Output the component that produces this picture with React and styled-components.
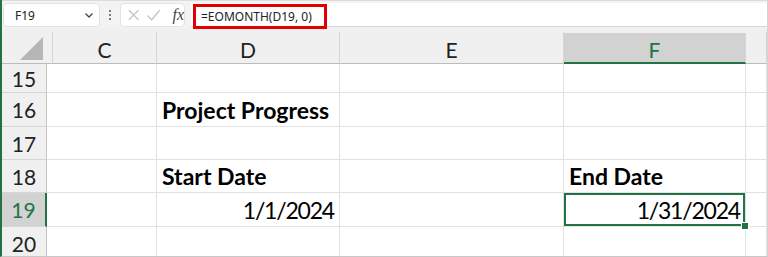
import React from 'react'
import styled, { createGlobalStyle, css } from 'styled-components'

const green = '#217346'
const COLS = [45, 6, 104, 183, 224, 182, 21]
const ROW_HEIGHTS = [29, 34, 33, 33, 34, 33]

const GlobalStyle = createGlobalStyle`
  html, body {
    margin: 0;
    padding: 0;
    background: #fff;
    overflow: hidden;
  }
  * { box-sizing: border-box; }
`

const Window = styled.div`
  width: 768px;
  height: 257px;
  overflow: hidden;
  display: flex;
  flex-direction: column;
  background: #f0f0f0;
  border-left: 2px solid ${green};
  border-right: 1px solid #d4d4d4;
  border-bottom: 1px solid #c8c8c8;
`

const FormulaBar = styled.div`
  flex: none;
  height: 28px;
  display: flex;
  align-items: flex-start;
  padding: 2px 0 0 1px;
  background: #f3f3f3;
  border-top: 1px solid #dcdcdc;
  font-family: "Noto Sans", "Open Sans", sans-serif;
  font-size: 12px;
  color: #222;
`

const NameBox = styled.div`
  width: 97px;
  height: 24px;
  display: flex;
  align-items: center;
  justify-content: space-between;
  padding: 0 4px 0 11px;
  background: #fff;
  border: 1px solid #e4e4e4;
  border-radius: 4px;
`

const Dots = styled.div`
  width: 20px;
  height: 24px;
  display: flex;
  flex-direction: column;
  align-items: center;
  justify-content: center;
  gap: 2px;
  & span {
    width: 2px;
    height: 2px;
    border-radius: 50%;
    background: #555;
  }
`

const ButtonBox = styled.div`
  width: 65px;
  height: 24px;
  display: flex;
  align-items: center;
  gap: 6px;
  padding-left: 6px;
  background: #fff;
  border: 1px solid #e4e4e4;
  border-radius: 4px;
`

const Fx = styled.span`
  margin-left: 5px;
  font-family: "Liberation Serif", serif;
  font-style: italic;
  font-size: 16px;
  color: #444;
`

const FormulaInput = styled.div`
  flex: 1;
  height: 24px;
  margin-left: 6px;
  background: #fff;
  border-bottom: 1px solid #d6d6d6;
  display: flex;
`

const Highlight = styled.div`
  height: 25px;
  margin: 1px 0 0 2px;
  padding: 0 12px 0 5px;
  display: flex;
  align-items: center;
  border: 3px solid #e00000;
  white-space: nowrap;
`

const Sheet = styled.div`
  padding-top: 4px;
  display: grid;
  grid-template-columns: ${COLS.map((c) => `${c}px`).join(' ')};
  grid-template-rows: 32px ${ROW_HEIGHTS.map((h) => `${h}px`).join(' ')};
  font-family: Lato, "Open Sans", sans-serif;
  color: #000;
`

const Corner = styled.div`
  background: #f0f0f0;
  border-bottom: 1px solid #bcbcbc;
  display: flex;
  align-items: flex-end;
  justify-content: flex-end;
  padding: 0 4px 3px 0;
  & svg { display: block; }
`

const ColHeader = styled.div`
  display: flex;
  align-items: center;
  justify-content: center;
  padding-top: 3px;
  font-size: 21px;
  color: #222;
  background: #f0f0f0;
  border-right: 1px solid #d6d6d6;
  border-bottom: 1px solid #bcbcbc;
  ${(p) => p.$selected && css`
    background: #d2d2d2;
    color: ${green};
    border-bottom: 2px solid ${green};
    margin-top: 1px;
  `}
`

const RowHeader = styled.div`
  display: flex;
  align-items: center;
  justify-content: center;
  font-size: 21px;
  color: #222;
  background: #f0f0f0;
  border-bottom: 1px solid #d6d6d6;
  border-right: 1px solid #c4c4c4;
  ${(p) => p.$selected && css`
    background: #d2d2d2;
    color: ${green};
    border-right: 2px solid ${green};
  `}
`

const Cell = styled.div`
  position: relative;
  display: flex;
  align-items: flex-end;
  justify-content: ${(p) => (p.$number ? 'flex-end' : 'flex-start')};
  padding: 0 5px 4px 5px;
  background: #fff;
  border-right: 1px solid #e1e1e1;
  border-bottom: 1px solid #e1e1e1;
  font-size: 23px;
  line-height: 1;
  font-weight: ${(p) => (p.$bold ? 700 : 400)};
  letter-spacing: ${(p) => (p.$number ? '-1.2px' : 'normal')};
  white-space: nowrap;
  ${(p) => p.$active && css`
    box-shadow: inset 0 0 0 2px ${green};
    z-index: 1;
    &::after {
      content: '';
      position: absolute;
      right: -4px;
      bottom: -4px;
      width: 6px;
      height: 6px;
      background: ${green};
      border: 1px solid #fff;
    }
  `}
`

const columns = ['B', 'C', 'D', 'E', 'F', 'G']
const visibleLabels = { C: 'C', D: 'D', E: 'E', F: 'F' }

const rows = [
  { n: 15 },
  { n: 16, cells: { D: { text: 'Project Progress', bold: true } } },
  { n: 17 },
  { n: 18, cells: { D: { text: 'Start Date', bold: true }, F: { text: 'End Date', bold: true } } },
  { n: 19, cells: { D: { text: '1/1/2024', number: true }, F: { text: '1/31/2024', number: true, active: true } } },
  { n: 20 },
]

const selectedCol = 'F'
const selectedRow = 19

function ChevronIcon() {
  return (
    <svg width="12" height="12" viewBox="0 0 12 12">
      <path d="M2.5 4.5 L6 8 L9.5 4.5" fill="none" stroke="#444" strokeWidth="1.3" />
    </svg>
  )
}

function CancelIcon() {
  return (
    <svg width="14" height="14" viewBox="0 0 14 14">
      <path d="M2 2 L12 12 M12 2 L2 12" stroke="#c4c4c4" strokeWidth="1.3" />
    </svg>
  )
}

function EnterIcon() {
  return (
    <svg width="16" height="14" viewBox="0 0 16 14">
      <path d="M1.5 7.5 L6 12 L14.5 2" fill="none" stroke="#c4c4c4" strokeWidth="1.3" />
    </svg>
  )
}

function SelectAllTriangle() {
  return (
    <svg width="23" height="23" viewBox="0 0 23 23">
      <polygon points="23,0 23,23 0,23" fill="#b6b6b6" />
    </svg>
  )
}

export default function App() {
  return (
    <>
      <GlobalStyle />
      <Window>
        <FormulaBar>
          <NameBox>
            <span>F19</span>
            <ChevronIcon />
          </NameBox>
          <Dots><span /><span /><span /></Dots>
          <ButtonBox>
            <CancelIcon />
            <EnterIcon />
            <Fx>fx</Fx>
          </ButtonBox>
          <FormulaInput>
            <Highlight>=EOMONTH(D19, 0)</Highlight>
          </FormulaInput>
        </FormulaBar>

        <Sheet>
          <Corner><SelectAllTriangle /></Corner>
          {columns.map((c) => (
            <ColHeader key={c} $selected={c === selectedCol}>
              {visibleLabels[c] || ''}
            </ColHeader>
          ))}

          {rows.map((row) => (
            <React.Fragment key={row.n}>
              <RowHeader $selected={row.n === selectedRow}>{row.n}</RowHeader>
              {columns.map((c) => {
                const cell = (row.cells && row.cells[c]) || {}
                return (
                  <Cell
                    key={c}
                    $bold={cell.bold}
                    $number={cell.number}
                    $active={cell.active}
                  >
                    {cell.text}
                  </Cell>
                )
              })}
            </React.Fragment>
          ))}
        </Sheet>
      </Window>
    </>
  )
}
